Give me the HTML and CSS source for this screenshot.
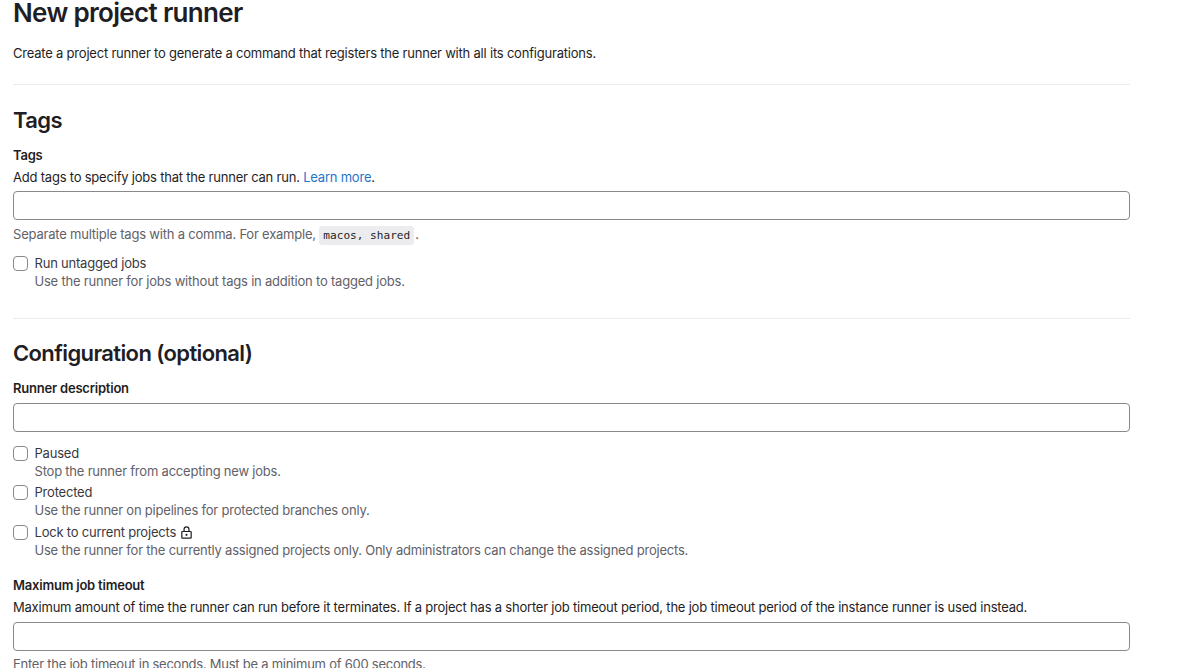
FILE: index.html
```html
<!DOCTYPE html>
<html lang="en">
<head>
<meta charset="utf-8">
<title>New project runner</title>
<link rel="stylesheet" href="styles.css">
</head>
<body>
<main class="page">
  <h1 class="title">New project runner</h1>
  <p class="lead">Create a project runner to generate a command that registers the runner with all its configurations.</p>
  <hr class="rule rule-top">
  <h2 class="section">Tags</h2>
  <div class="label">Tags</div>
  <p class="help">Add tags to specify jobs that the runner can run. <a class="link" href="#">Learn more</a>.</p>
  <input class="field" type="text" aria-label="Tags">
  <p class="hint">Separate multiple tags with a comma. For example, <code class="code">macos, shared</code>.</p>
  <label class="check check-first">
    <span class="box"></span>
    <span class="check-text"><span class="check-title">Run untagged jobs</span><span class="check-sub">Use the runner for jobs without tags in addition to tagged jobs.</span></span>
  </label>
  <hr class="rule rule-mid">
  <h2 class="section section-config">Configuration (optional)</h2>
  <div class="label">Runner description</div>
  <input class="field field-desc" type="text" aria-label="Runner description">
  <div class="checks">
    <label class="check">
      <span class="box"></span>
      <span class="check-text"><span class="check-title">Paused</span><span class="check-sub">Stop the runner from accepting new jobs.</span></span>
    </label>
    <label class="check">
      <span class="box"></span>
      <span class="check-text"><span class="check-title">Protected</span><span class="check-sub">Use the runner on pipelines for protected branches only.</span></span>
    </label>
    <label class="check">
      <span class="box"></span>
      <span class="check-text"><span class="check-title">Lock to current projects <svg class="lock" viewBox="0 0 16 16" width="13" height="13" aria-hidden="true"><path fill="none" stroke="currentColor" stroke-width="1.5" d="M3 6.75h10a.75.75 0 0 1 .75.75v6.75a.75.75 0 0 1-.75.75H3a.75.75 0 0 1-.75-.75V7.5A.75.75 0 0 1 3 6.75zM5 6.5V4a3 3 0 0 1 6 0v2.5"/><circle cx="8" cy="10.9" r="1.3" fill="currentColor"/></svg></span><span class="check-sub">Use the runner for the currently assigned projects only. Only administrators can change the assigned projects.</span></span>
    </label>
  </div>
  <div class="label label-timeout">Maximum job timeout</div>
  <p class="help help-timeout">Maximum amount of time the runner can run before it terminates. If a project has a shorter job timeout period, the job timeout period of the instance runner is used instead.</p>
  <input class="field field-timeout" type="text" aria-label="Maximum job timeout">
  <p class="hint hint-last">Enter the job timeout in seconds. Must be a minimum of 600 seconds.</p>
</main>
</body>
</html>
```
FILE: styles.css
```css
html, body {
  margin: 0;
  height: 668px;
  overflow: hidden;
  background: #fff;
}
body {
  font-family: Inter, "Noto Sans", sans-serif;
  font-size: 13px;
  line-height: 20px;
  letter-spacing: -0.21px;
  color: #1f1e24;
}
.page {
  width: 1117px;
  margin-left: 13px;
}
.title {
  margin: 0;
  font-size: 26px;
  line-height: 26px;
  font-weight: 600;
  letter-spacing: -0.67px;
}
.lead {
  margin: 17px 0 0;
}
.rule {
  border: 0;
  height: 1px;
  background: #ececef;
  margin: 0;
}
.rule-top { margin-top: 21px; }
.rule-mid { margin-top: 28px; }
.section {
  margin: 22px 0 0;
  font-size: 22px;
  line-height: 26px;
  font-weight: 600;
  letter-spacing: -0.62px;
}
.section-config { margin-top: 21px; }
.label {
  margin-top: 12px;
  font-weight: 600;
}
.label-timeout { margin-top: 16px; }
.help {
  margin: 1.5px 0 0;
}
.help-timeout { margin-top: 2.5px; }
.link {
  color: #1f75cb;
  text-decoration: none;
}
.field {
  display: block;
  box-sizing: border-box;
  width: 100%;
  height: 29px;
  margin: 4px 0 0;
  padding: 0 8px;
  background: #fff;
  border: 1px solid #89888d;
  border-radius: 4px;
  font: inherit;
}
.field-desc { margin-top: 5px; }
.field-timeout { margin-top: 5px; }
.hint {
  margin: 4px 0 0;
  color: #626168;
}
.hint-last {
  margin-top: 3px;
  letter-spacing: -0.25px;
}
.code {
  display: inline-block;
  margin: 0 1px 0 0;
  padding: 0 4px;
  border-radius: 3px;
  background: #ececef;
  color: #1f1e24;
  font-family: "DejaVu Sans Mono", monospace;
  font-size: 11.1px;
  letter-spacing: 0;
  line-height: 19px;
}
.check {
  display: flex;
  gap: 6.5px;
  line-height: 18px;
}
.check-first { margin-top: 9px; }
.checks {
  display: flex;
  flex-direction: column;
  gap: 3.5px;
  margin-top: 12px;
}
.box {
  flex: none;
  box-sizing: border-box;
  width: 15px;
  height: 15px;
  margin-top: 2px;
  border: 1px solid #89888d;
  border-radius: 4px;
  background: #fff;
}
.check-text {
  display: flex;
  flex-direction: column;
}
.check-title {
  color: #3a383f;
}
.check-sub {
  color: #626168;
}
.lock {
  vertical-align: -2px;
  margin-left: 1px;
  color: #1f1e24;
}
```
